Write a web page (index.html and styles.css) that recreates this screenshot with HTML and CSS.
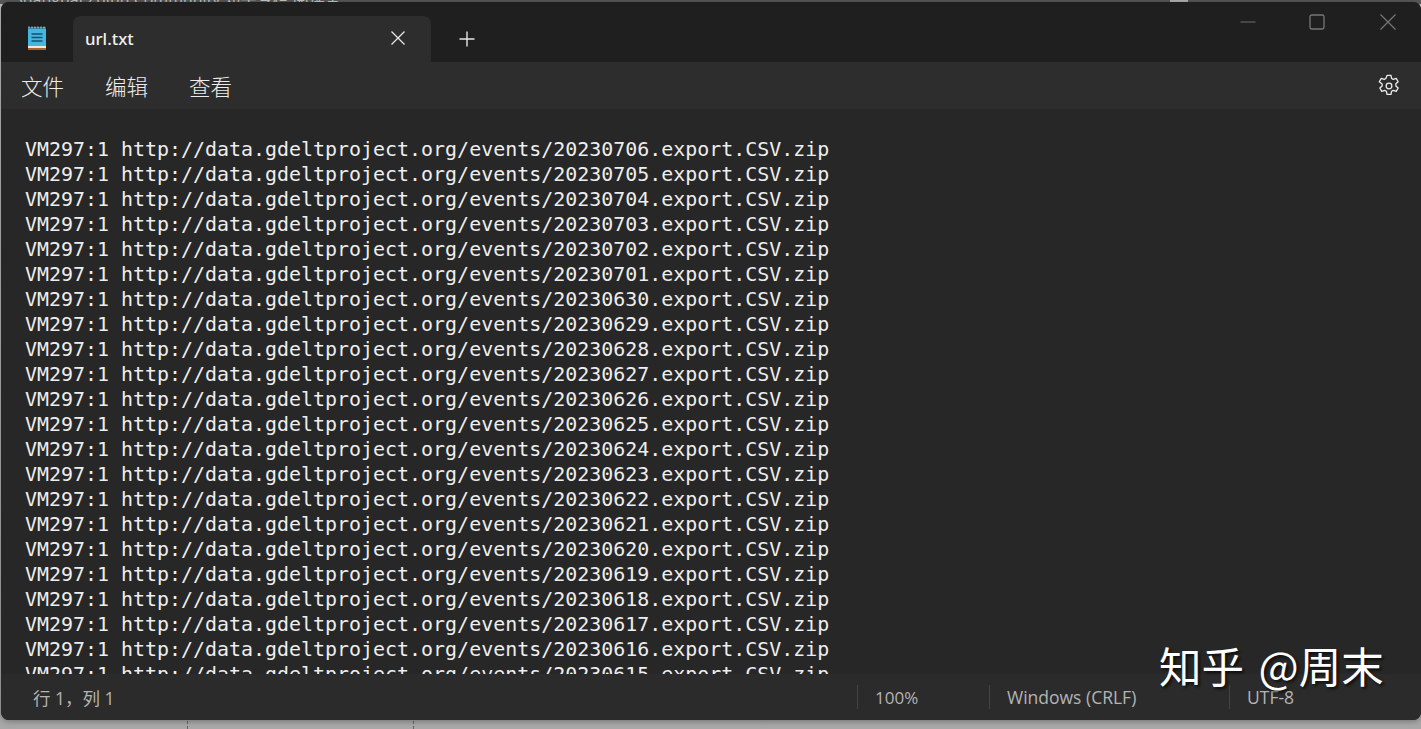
FILE: index.html
```html
<!DOCTYPE html>
<html lang="zh">
<head>
<meta charset="utf-8">
<title>url.txt</title>
<link rel="stylesheet" href="styles.css">
</head>
<body>
<div class="backdrop-top"><span class="backdrop-text">Shanghai Zhihu Community 知乎专栏 阅读全</span><i class="backdrop-block"></i></div>
<i class="tick tick-a"></i>
<i class="tick tick-b"></i>
<main class="window">
  <header class="titlebar">
    <div class="app-icon">
      <svg width="18" height="24" viewBox="0 0 18 24">
        <path d="M0 2h18v18H0z" fill="#45b6e0"/>
        <path d="M0 1h18v2H0z" fill="#2c6f8c"/>
        <path d="M1 .5v2M4 .5v2M7 .5v2M10 .5v2M13 .5v2M16 .5v2" stroke="#8fd2ea" stroke-width="1.200"/>
        <path d="M0 20h18v2H0z" fill="#f2e8da"/>
        <path d="M0 22h18v2H0z" fill="#a8622a"/>
        <path d="M3.500 8h11M3.500 11.500h11M3.500 15h11" stroke="#14506e" stroke-width="1.600"/>
      </svg>
    </div>
    <div class="tab">
      <span class="tab-name">url.txt</span>
      <svg class="tab-close" width="16" height="16" viewBox="0 0 16 16"><path d="M1.500 1.500l13 13M14.500 1.500l-13 13" stroke="#e6e6e6" stroke-width="1.300" fill="none"/></svg>
    </div>
    <svg class="new-tab" width="16" height="16" viewBox="0 0 16 16"><path d="M8 .5v15M.5 8h15" stroke="#e6e6e6" stroke-width="1.400" fill="none"/></svg>
    <div class="win-controls">
      <svg class="ctl-min" width="16" height="16" viewBox="0 0 16 16"><path d="M.5 8h15" stroke="#6e6e6e" stroke-width="1.200"/></svg>
      <svg width="16" height="16" viewBox="0 0 16 16"><rect x="1" y="1" width="14" height="14" rx="1.800" stroke="#767676" stroke-width="1.300" fill="none"/></svg>
      <svg width="16" height="16" viewBox="0 0 16 16"><path d="M.5.500l15 15M15.500.500l-15 15" stroke="#767676" stroke-width="1.200" fill="none"/></svg>
    </div>
  </header>
  <nav class="menubar">
    <span class="menu-item">文件</span>
    <span class="menu-item">编辑</span>
    <span class="menu-item">查看</span>
    <svg class="gear" width="24" height="24" viewBox="0 0 22 22"><path d="M9.200 1.300h3.600l.6 2.800 1.500.8 2.700-.9 1.800 3.100-2.100 1.900v1.900l2.100 1.900-1.800 3.100-2.700-.9-1.500.8-.6 2.800H9.200l-.6-2.800-1.500-.8-2.700.9-1.800-3.100 2.100-1.900V9.100L2.100 7.100l1.800-3.100 2.700.9 1.500-.8z" stroke="#ececec" stroke-width="1.200" stroke-linejoin="round" fill="none"/><circle cx="11" cy="11" r="2.600" stroke="#ececec" stroke-width="1.200" fill="none"/></svg>
  </nav>
  <section class="editor">
    <pre class="lines">VM297:1 http://data.gdeltproject.org/events/20230706.export.CSV.zip
VM297:1 http://data.gdeltproject.org/events/20230705.export.CSV.zip
VM297:1 http://data.gdeltproject.org/events/20230704.export.CSV.zip
VM297:1 http://data.gdeltproject.org/events/20230703.export.CSV.zip
VM297:1 http://data.gdeltproject.org/events/20230702.export.CSV.zip
VM297:1 http://data.gdeltproject.org/events/20230701.export.CSV.zip
VM297:1 http://data.gdeltproject.org/events/20230630.export.CSV.zip
VM297:1 http://data.gdeltproject.org/events/20230629.export.CSV.zip
VM297:1 http://data.gdeltproject.org/events/20230628.export.CSV.zip
VM297:1 http://data.gdeltproject.org/events/20230627.export.CSV.zip
VM297:1 http://data.gdeltproject.org/events/20230626.export.CSV.zip
VM297:1 http://data.gdeltproject.org/events/20230625.export.CSV.zip
VM297:1 http://data.gdeltproject.org/events/20230624.export.CSV.zip
VM297:1 http://data.gdeltproject.org/events/20230623.export.CSV.zip
VM297:1 http://data.gdeltproject.org/events/20230622.export.CSV.zip
VM297:1 http://data.gdeltproject.org/events/20230621.export.CSV.zip
VM297:1 http://data.gdeltproject.org/events/20230620.export.CSV.zip
VM297:1 http://data.gdeltproject.org/events/20230619.export.CSV.zip
VM297:1 http://data.gdeltproject.org/events/20230618.export.CSV.zip
VM297:1 http://data.gdeltproject.org/events/20230617.export.CSV.zip
VM297:1 http://data.gdeltproject.org/events/20230616.export.CSV.zip
VM297:1 http://data.gdeltproject.org/events/20230615.export.CSV.zip</pre>
  </section>
  <footer class="statusbar">
    <span class="status-pos">行 1，列 1</span>
    <span class="status-cell status-zoom">100%</span>
    <span class="status-cell status-eol">Windows (CRLF)</span>
    <span class="status-cell status-enc">UTF-8</span>
  </footer>
</main>
<div class="watermark">知乎 @周末</div>
</body>
</html>
```

FILE: styles.css
```css
* { box-sizing: border-box; }
html, body { margin: 0; padding: 0; }
body {
  width: 1421px;
  height: 729px;
  overflow: hidden;
  position: relative;
  background: linear-gradient(#c4c4c4, #a8a8a8);
  font-family: "Open Sans", "Noto Sans CJK SC", sans-serif;
}
.backdrop-top {
  position: absolute;
  top: 0; left: 0; right: 0;
  height: 4px;
  overflow: hidden;
  background: #5a5a5a;
}
.backdrop-text {
  position: absolute;
  top: -14px;
  left: 14px;
  font-size: 16px;
  color: #c9c9c9;
}
.backdrop-block {
  position: absolute;
  top: 0;
  left: 1170px;
  width: 18px;
  height: 4px;
  background: #b4b4b4;
}
.tick {
  position: absolute;
  top: 721px;
  width: 1px;
  height: 8px;
  background: repeating-linear-gradient(#666666 0 3px, transparent 3px 5px);
}
.tick-a { left: 187px; }
.tick-b { left: 413px; }
.window {
  position: absolute;
  top: 2px; left: 1px;
  width: 1420px;
  height: 718px;
  border-radius: 8px;
  overflow: hidden;
  display: flex;
  flex-direction: column;
  background: #272727;
  box-shadow: 0 1px 6px rgba(0,0,0,.35);
}
.titlebar {
  height: 60px;
  flex: none;
  background: #1f1f1f;
  display: flex;
  align-items: flex-end;
  position: relative;
}
.app-icon {
  width: 72px;
  height: 60px;
  display: flex;
  align-items: center;
  justify-content: center;
  padding: 12px 0 0 0;
}
.tab {
  width: 358px;
  height: 46px;
  background: #2d2d2d;
  border-radius: 8px 8px 0 0;
  display: flex;
  align-items: center;
  justify-content: space-between;
  padding: 0 25px 2px 12px;
}
.tab-name {
  font-family: "Noto Sans", sans-serif;
  font-size: 16.800px;
  font-weight: 500;
  color: #f0f0f0;
}
.new-tab { margin: 0 0 15px 28px; }
.win-controls {
  position: absolute;
  top: 12px;
  right: 25px;
  display: flex;
  gap: 55px;
}
.ctl-min { margin-right: -2px; }
.menubar {
  height: 47px;
  flex: none;
  background: #2d2d2d;
  display: flex;
  align-items: center;
  gap: 41px;
  padding: 0 20px 0 20px;
}
.menu-item {
  font-size: 21.500px;
  color: #ededed;
  font-weight: 300;
}
.gear { margin-left: auto; }
.editor {
  flex: 1;
  min-height: 0;
  overflow: hidden;
  background: #272727;
  padding: 28px 0 0 24px;
}
.lines {
  margin: 0;
  font-family: "DejaVu Sans Mono", monospace;
  font-size: 19.960px;
  line-height: 25px;
  color: #eeeeee;
}
.statusbar {
  height: 46px;
  flex: none;
  background: #2b2b2b;
  display: flex;
  align-items: center;
  padding: 0 0 0 32px;
  font-size: 17.500px;
  color: #b4b4b4;
}
.status-pos { width: 824px; flex: none; }
.status-cell {
  height: 24px;
  display: flex;
  align-items: center;
  border-left: 1px solid #444444;
  padding-left: 17px;
  flex: none;
}
.status-zoom { width: 132px; font-size: 17px; }
.status-eol { width: 240px; }
.status-enc { width: 150px; }
.watermark {
  position: absolute;
  left: 1159px;
  top: 643px;
  font-family: "Noto Sans CJK SC", sans-serif;
  font-size: 42.500px;
  line-height: 44px;
  word-spacing: 5px;
  color: #ffffff;
  text-shadow: 2px 2px 3px rgba(0,0,0,.7);
  white-space: nowrap;
}
```
